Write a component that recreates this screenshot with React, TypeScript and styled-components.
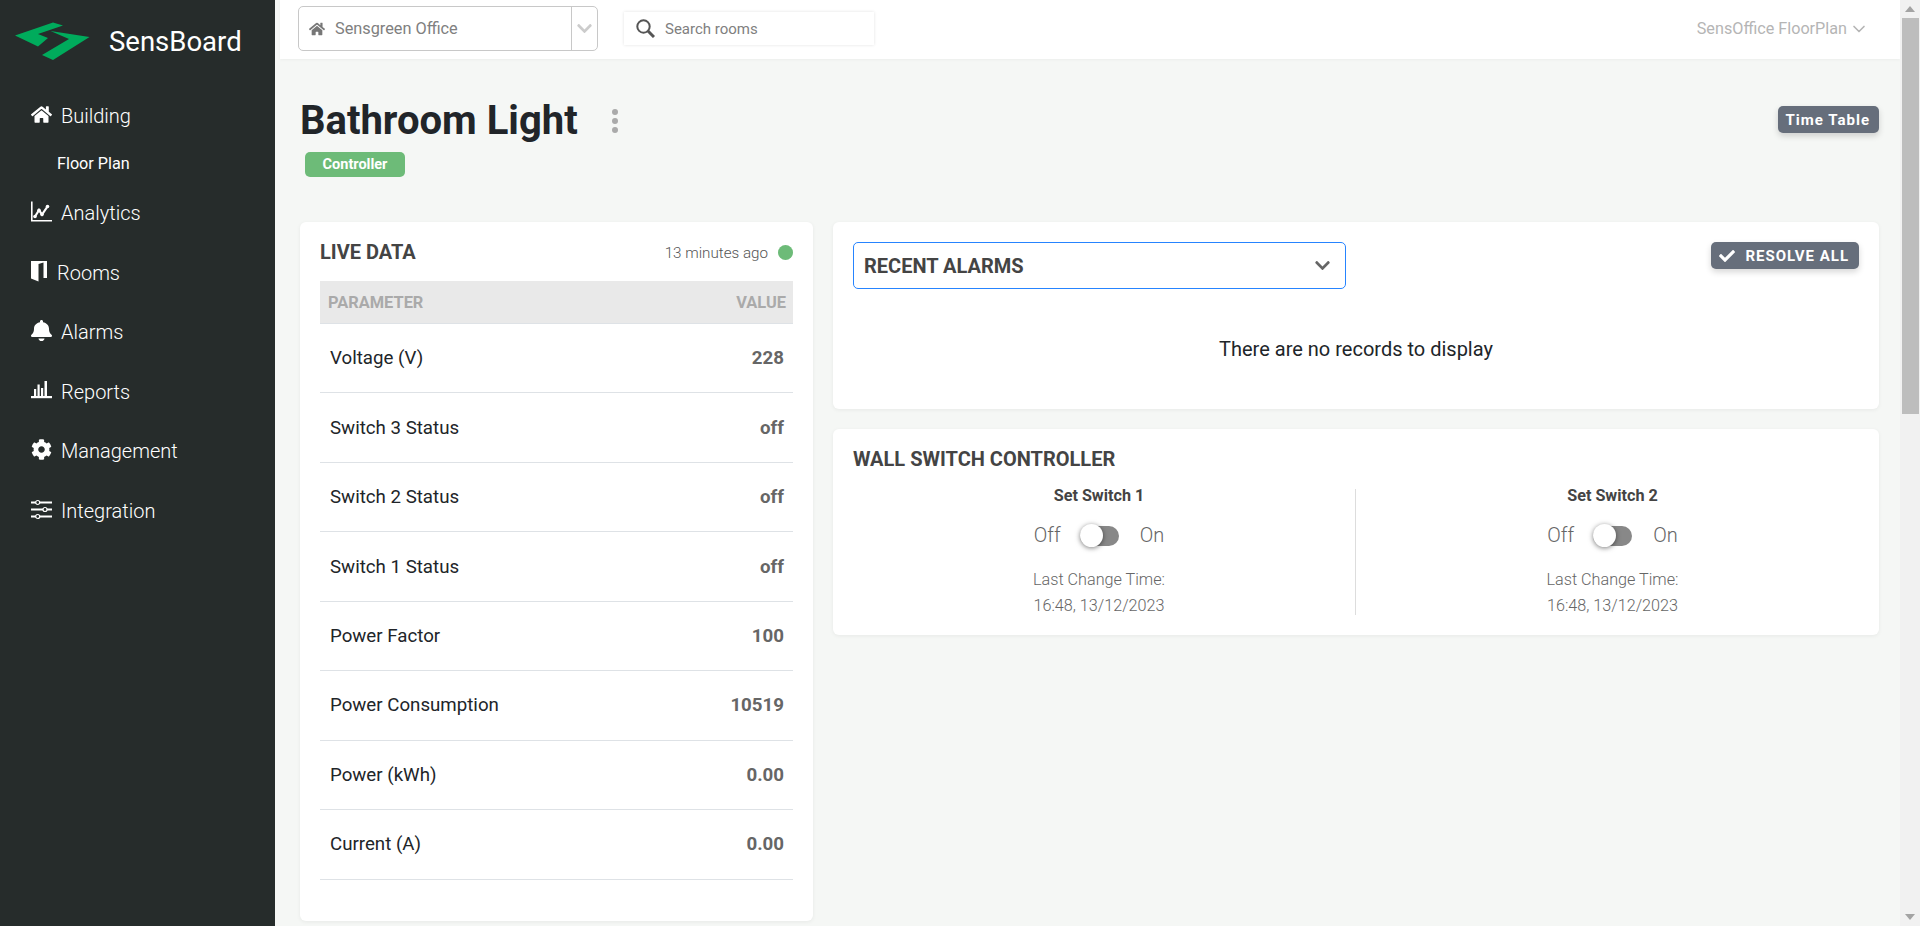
import React from "react";
import styled, { createGlobalStyle } from "styled-components";
import { FaHome, FaBell, FaCog, FaCheck, FaChevronDown } from "react-icons/fa";
import { FiChevronDown } from "react-icons/fi";

const GlobalStyle = createGlobalStyle`
	html, body {
		margin: 0;
		height: 926px;
		overflow: hidden;
		background: #f5f7f5;
		font-family: Roboto, "Liberation Sans", sans-serif;
		color: #212529;
	}
	* {
		box-sizing: border-box;
	}
`;

const Page = styled.div`
	display: flex;
	width: 1920px;
	height: 926px;
	overflow: hidden;
`;

const Sidebar = styled.aside`
	width: 275px;
	flex: none;
	background: #262c2b;
	color: #fff;
`;

const Brand = styled.div`
	display: flex;
	align-items: center;
	gap: 19px;
	height: 82px;
	padding-left: 15px;
`;

const BrandName = styled.span`
	font-size: 27.5px;
	font-weight: 400;
`;

const NavList = styled.nav`
	display: flex;
	flex-direction: column;
	padding-left: 31px;
	padding-top: 4px;
`;

const NavItem = styled.div<{ $narrow?: boolean }>`
	display: flex;
	align-items: center;
	gap: ${(p) => (p.$narrow ? "10px" : "9px")};
	height: 59.6px;
	font-size: 20px;
	font-weight: 300;

	svg {
		flex: none;
		width: ${(p) => (p.$narrow ? "16px" : "21px")};
		height: 21px;
		margin-top: -3px;
	}
`;

const SubItem = styled.div`
	height: 37.6px;
	padding-left: 26px;
	font-size: 16.2px;
	font-weight: 400;
	line-height: 35px;
`;

const Content = styled.div`
	flex: 1;
	min-width: 0;
	padding-left: 5px;
`;

const TopBar = styled.header`
	display: flex;
	align-items: center;
	height: 59px;
	padding: 0 31px 2px 18px;
	background: #fff;
	box-shadow: 0 1px 3px rgba(0, 0, 0, 0.04);
`;

const SiteSelect = styled.div`
	display: flex;
	align-items: stretch;
	width: 300px;
	height: 45px;
	border: 1px solid #c8c8c8;
	border-radius: 5px;
`;

const SiteValue = styled.div`
	flex: 1;
	display: flex;
	align-items: center;
	gap: 10px;
	padding-left: 10px;
	font-size: 16.3px;
	color: #808080;

	svg {
		width: 16px;
		height: 16px;
		color: #777;
	}
`;

const SiteArrow = styled.div`
	width: 26px;
	display: flex;
	align-items: center;
	justify-content: center;
	border-left: 1px solid #c8c8c8;
	color: #ccc;

	svg {
		width: 17px;
		height: 17px;
	}
`;

const SearchBox = styled.div`
	display: flex;
	align-items: center;
	gap: 10px;
	width: 250px;
	height: 33px;
	margin-left: 26px;
	padding-left: 12px;
	background: #fff;
	box-shadow: 0 0 3px rgba(0, 0, 0, 0.12);
	font-size: 15px;
	color: #808080;

	svg {
		width: 19px;
		height: 19px;
	}
`;

const PlanMenu = styled.div`
	display: flex;
	align-items: center;
	gap: 2px;
	margin-left: auto;
	font-size: 16.2px;
	color: #b5b5b5;

	svg {
		width: 20px;
		height: 20px;
	}
`;

const Main = styled.main`
	padding: 0 21px 0 20px;
`;

const TitleRow = styled.div`
	display: flex;
	justify-content: space-between;
	align-items: flex-start;
	height: 163px;
	padding-top: 38px;
`;

const TitleLine = styled.div`
	display: flex;
	align-items: center;
	gap: 34px;
`;

const Title = styled.h1`
	margin: 0;
	font-size: 40px;
	font-weight: 700;
	line-height: 47px;
	color: #212529;
`;

const Dots = styled.div`
	display: flex;
	flex-direction: column;
	gap: 3px;

	i {
		display: block;
		width: 6px;
		height: 6px;
		border-radius: 50%;
		background: #aaa;
	}
`;

const TypeBadge = styled.span`
	display: inline-flex;
	align-items: center;
	justify-content: center;
	width: 100px;
	height: 25px;
	margin: 8px 0 0 5px;
	border-radius: 5px;
	background: #6dbb78;
	color: #fff;
	font-size: 14.5px;
	font-weight: 700;
`;

const DarkButton = styled.button`
	display: inline-flex;
	align-items: center;
	gap: 10px;
	height: 27px;
	padding: 0 10px 0 8px;
	border: 0;
	border-radius: 5px;
	background: #666e7b;
	box-shadow: 0 3px 6px rgba(0, 0, 0, 0.16);
	color: #fff;
	font-family: inherit;
	font-size: 15px;
	font-weight: 700;
	letter-spacing: 1px;
	white-space: nowrap;

	svg {
		width: 16px;
		height: 16px;
	}
`;

const TimeTableButton = styled(DarkButton)`
	margin-top: 9px;
	padding: 0 9px 0 8px;
`;

const Columns = styled.div`
	display: grid;
	grid-template-columns: 513px 1fr;
	gap: 20px;
	align-items: start;
`;

const Card = styled.section`
	padding: 20px;
	background: #fff;
	border-radius: 6px;
	box-shadow: 0 1px 4px rgba(0, 0, 0, 0.06);
`;

const LiveCard = styled(Card)`
	height: 699px;
`;

const RightStack = styled.div`
	display: flex;
	flex-direction: column;
	gap: 20px;
`;

const CardHeader = styled.div`
	display: flex;
	justify-content: space-between;
	align-items: center;
	height: 21px;
	margin-bottom: 18px;
`;

const CardTitle = styled.h2`
	margin: 0;
	font-size: 20px;
	font-weight: 700;
	line-height: 23px;
	color: #444;
`;

const LastSeen = styled.div`
	display: flex;
	align-items: center;
	gap: 10px;
	font-size: 15.2px;
	font-weight: 300;
	color: #555;
`;

const StatusDot = styled.span`
	width: 15px;
	height: 15px;
	border-radius: 50%;
	background: #6dbb78;
`;

const TableHead = styled.div`
	display: flex;
	justify-content: space-between;
	align-items: center;
	height: 43px;
	padding: 0 7px 0 8px;
	background: #e9e9e9;
	border-bottom: 1px solid #dee2e6;
	font-size: 16.4px;
	font-weight: 700;
	color: #aaa;
`;

const Row = styled.div`
	display: flex;
	justify-content: space-between;
	align-items: center;
	height: 69.44px;
	padding: 0 9px 0 10px;
	border-bottom: 1px solid #dee2e6;
	font-size: 18.7px;
`;

const RowValue = styled.span`
	font-weight: 700;
	color: #666;
`;

const AlarmHead = styled.div`
	display: flex;
	justify-content: space-between;
	align-items: flex-start;
`;

const AlarmSelect = styled.div`
	display: flex;
	justify-content: space-between;
	align-items: center;
	width: 493px;
	height: 47px;
	padding: 0 14px 0 10px;
	border: 1px solid #2684ff;
	border-radius: 5px;
	font-size: 20px;
	font-weight: 700;
	color: #444;

	svg {
		width: 17px;
		height: 17px;
		color: #666;
	}
`;

const EmptyNote = styled.div`
	height: 100px;
	padding-top: 48px;
	text-align: center;
	font-size: 20px;
	line-height: 24px;
`;

const SwitchCard = styled(Card)`
	height: 206px;
	padding-top: 19px;
`;

const SwitchGrid = styled.div`
	display: grid;
	grid-template-columns: 1fr 1fr;
	margin-top: 18px;
`;

const SwitchCol = styled.div<{ $first?: boolean }>`
	display: flex;
	flex-direction: column;
	align-items: center;
	height: 126px;
	padding: ${(p) => (p.$first ? "0 10px 0 0" : "0 0 0 10px")};
	${(p) => (p.$first ? "border-right: 1px solid #ddd;" : "")}
`;

const SwitchName = styled.div`
	font-size: 16.2px;
	font-weight: 700;
	line-height: 14px;
	color: #444;
`;

const ToggleLine = styled.div`
	display: flex;
	align-items: center;
	gap: 19px;
	margin-top: 21px;
	font-size: 20px;
	font-weight: 300;
	line-height: 23px;
	color: #666;
`;

const Toggle = styled.span`
	position: relative;
	display: block;
	width: 39px;
	height: 20px;
	margin-right: 2px;
	border-radius: 10px;
	background: #888;

	&::after {
		content: "";
		position: absolute;
		left: 0;
		top: -2px;
		width: 23px;
		height: 23px;
		border-radius: 50%;
		background: #fff;
		box-shadow: 0 1px 5px rgba(0, 0, 0, 0.5);
	}
`;

const ChangeTime = styled.div`
	margin-top: 20px;
	font-size: 16.2px;
	font-weight: 300;
	line-height: 26px;
	text-align: center;
	color: #666;
`;

const ScrollTrack = styled.div`
	display: flex;
	flex-direction: column;
	align-items: center;
	width: 20px;
	flex: none;
	height: 926px;
	background: #f1f1f1;
`;

const ScrollArrow = styled.div<{ $down?: boolean }>`
	width: 0;
	height: 0;
	margin: 6px 0;
	border-left: 5px solid transparent;
	border-right: 5px solid transparent;
	${(p) =>
		p.$down
			? "border-top: 6px solid #a3a3a3;"
			: "border-bottom: 6px solid #a3a3a3;"}
`;

const ScrollThumb = styled.div`
	width: 17px;
	height: 396px;
	margin-bottom: auto;
	background: #bdbdbd;
`;

const Logo = () => (
	<svg width="75" height="38" viewBox="0 0 75 38">
		<path d="M0 13.500 L38 0.500 L48 3.500 L23 12 L33 16 L23 24.500 Z" fill="#00ab5c" />
		<path d="M74.500 15 L35.500 9 L54 17 L27 33 L38 38 Z" fill="#00ab5c" />
	</svg>
);

const ChartIcon = () => (
	<svg viewBox="0 0 21 20">
		<path d="M0.800 0V19.200H21" fill="none" stroke="#fff" strokeWidth="1.600" />
		<path d="M4 15L8 8.700L11 13L16.500 5" fill="none" stroke="#fff" strokeWidth="2.200" />
		<circle cx="4" cy="15" r="1.800" fill="#fff" />
		<circle cx="8" cy="8.700" r="1.800" fill="#fff" />
		<circle cx="11" cy="13" r="1.800" fill="#fff" />
		<circle cx="16.500" cy="5" r="1.800" fill="#fff" />
	</svg>
);

const RoomIcon = () => (
	<svg viewBox="0 0 16 21" fill="#fff">
		<path d="M0 0H16V17H12.500V1.500L7.500 3V20.500L0 17.500Z" />
	</svg>
);

const ReportIcon = () => (
	<svg viewBox="0 0 21 21" fill="#fff">
		<rect x="0" y="16" width="21" height="2.200" />
		<rect x="3" y="9" width="2.200" height="7" />
		<rect x="6.500" y="4.500" width="2.200" height="11.500" />
		<rect x="10" y="8" width="2.200" height="8" />
		<rect x="13.500" y="1" width="2.500" height="15" />
	</svg>
);

const SliderIcon = () => (
	<svg viewBox="0 0 21 21">
		<path d="M0 3.500H21M0 10.500H21M0 17.500H21" fill="none" stroke="#fff" strokeWidth="2" />
		<circle cx="6.700" cy="3.500" r="2" fill="#262c2b" stroke="#fff" strokeWidth="1.200" />
		<circle cx="14" cy="10.500" r="2" fill="#262c2b" stroke="#fff" strokeWidth="1.200" />
		<circle cx="6.700" cy="17.500" r="2" fill="#262c2b" stroke="#fff" strokeWidth="1.200" />
	</svg>
);

const SearchIcon = () => (
	<svg viewBox="0 0 19 19">
		<circle cx="7.500" cy="7.500" r="6.200" fill="none" stroke="#555" strokeWidth="2" />
		<path d="M12 12L18 18" stroke="#555" strokeWidth="3" />
	</svg>
);

const liveRows = [
	{ name: "Voltage (V)", value: "228" },
	{ name: "Switch 3 Status", value: "off" },
	{ name: "Switch 2 Status", value: "off" },
	{ name: "Switch 1 Status", value: "off" },
	{ name: "Power Factor", value: "100" },
	{ name: "Power Consumption", value: "10519" },
	{ name: "Power (kWh)", value: "0.00" },
	{ name: "Current (A)", value: "0.00" },
];

const switches = ["Set Switch 1", "Set Switch 2"];

const App = () => {
	return (
		<Page>
			<GlobalStyle />
			<Sidebar>
				<Brand>
					<Logo />
					<BrandName>SensBoard</BrandName>
				</Brand>
				<NavList>
					<NavItem>
						<FaHome />
						Building
					</NavItem>
					<SubItem>Floor Plan</SubItem>
					<NavItem>
						<ChartIcon />
						Analytics
					</NavItem>
					<NavItem $narrow>
						<RoomIcon />
						Rooms
					</NavItem>
					<NavItem>
						<FaBell preserveAspectRatio="none" />
						Alarms
					</NavItem>
					<NavItem>
						<ReportIcon />
						Reports
					</NavItem>
					<NavItem>
						<FaCog />
						Management
					</NavItem>
					<NavItem>
						<SliderIcon />
						Integration
					</NavItem>
				</NavList>
			</Sidebar>
			<Content>
				<TopBar>
					<SiteSelect>
						<SiteValue>
							<FaHome />
							Sensgreen Office
						</SiteValue>
						<SiteArrow>
							<FaChevronDown />
						</SiteArrow>
					</SiteSelect>
					<SearchBox>
						<SearchIcon />
						Search rooms
					</SearchBox>
					<PlanMenu>
						SensOffice FloorPlan
						<FiChevronDown />
					</PlanMenu>
				</TopBar>
				<Main>
					<TitleRow>
						<div>
							<TitleLine>
								<Title>Bathroom Light</Title>
								<Dots>
									<i />
									<i />
									<i />
								</Dots>
							</TitleLine>
							<TypeBadge>Controller</TypeBadge>
						</div>
						<TimeTableButton>Time Table</TimeTableButton>
					</TitleRow>
					<Columns>
						<LiveCard>
							<CardHeader>
								<CardTitle>LIVE DATA</CardTitle>
								<LastSeen>
									13 minutes ago
									<StatusDot />
								</LastSeen>
							</CardHeader>
							<TableHead>
								<span>PARAMETER</span>
								<span>VALUE</span>
							</TableHead>
							{liveRows.map((row) => (
								<Row key={row.name}>
									<span>{row.name}</span>
									<RowValue>{row.value}</RowValue>
								</Row>
							))}
						</LiveCard>
						<RightStack>
							<Card>
								<AlarmHead>
									<AlarmSelect>
										RECENT ALARMS
										<FaChevronDown />
									</AlarmSelect>
									<DarkButton>
										<FaCheck />
										RESOLVE ALL
									</DarkButton>
								</AlarmHead>
								<EmptyNote>There are no records to display</EmptyNote>
							</Card>
							<SwitchCard>
								<CardTitle>WALL SWITCH CONTROLLER</CardTitle>
								<SwitchGrid>
									{switches.map((name, idx) => (
										<SwitchCol key={name} $first={idx === 0}>
											<SwitchName>{name}</SwitchName>
											<ToggleLine>
												Off
												<Toggle />
												On
											</ToggleLine>
											<ChangeTime>
												Last Change Time:
												<br />
												16:48, 13/12/2023
											</ChangeTime>
										</SwitchCol>
									))}
								</SwitchGrid>
							</SwitchCard>
						</RightStack>
					</Columns>
				</Main>
			</Content>
			<ScrollTrack>
				<ScrollArrow />
				<ScrollThumb />
				<ScrollArrow $down />
			</ScrollTrack>
		</Page>
	);
};

export default App;
